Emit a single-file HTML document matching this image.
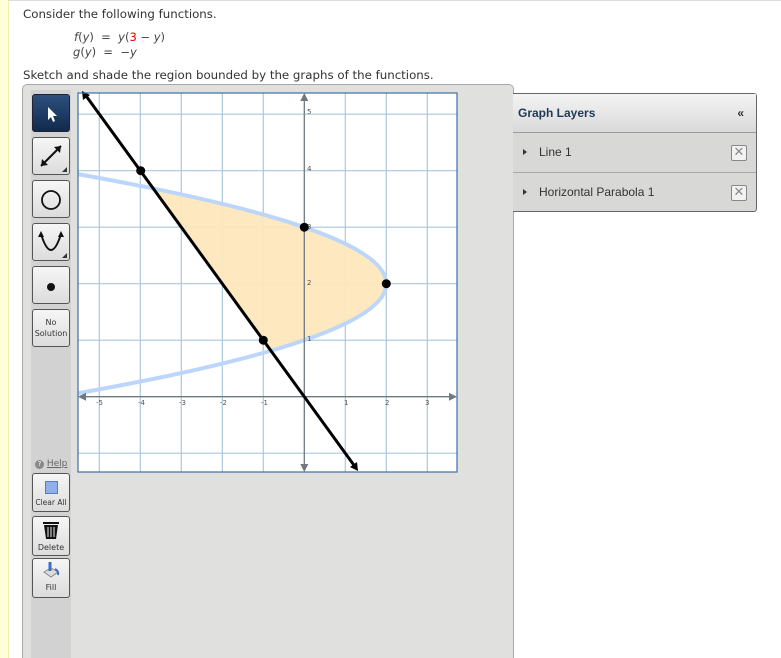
<!DOCTYPE html>
<html style="margin:0;height:658px;overflow:hidden"><head><meta charset="utf-8"><style>
body{margin:0;width:781px;height:658px;overflow:hidden;background:#fff;font-family:"DejaVu Sans","Liberation Sans",sans-serif;position:relative}
.strip{position:absolute;left:0;top:0;width:8px;height:658px;background:#fffed6;border-right:1px solid #f0eeb0}
.topline{position:absolute;left:8px;top:0;right:0;height:1px;background:#ddd}
.t{position:absolute;font-size:11.8px;color:#333;white-space:nowrap}
.m{position:absolute;font-size:11.5px;color:#444;font-family:"DejaVu Sans",sans-serif}
.panel{position:absolute;left:22px;top:84px;width:490px;height:590px;background:#e0e0df;border:1px solid #a8a8a8;border-radius:5px}
.tb{position:absolute;left:31px;top:90px;width:40px;height:570px;background:#d2d2d2}
.btn{position:absolute;left:32px;width:36px;height:36px;border:1px solid #555;border-radius:3px;background:linear-gradient(#f6f6f6,#dcdcdc);font-size:8px;color:#333;text-align:center;white-space:nowrap}
.btn svg{position:absolute;left:0;top:0}
.gl{position:absolute;left:513px;top:93px;width:243px;height:117px;border:1px solid #666;border-left:none;border-radius:0 3px 3px 0;background:#d8d8d6}
.gh{height:38px;background:linear-gradient(#f4f4f4,#d9d9d9);border-bottom:1px solid #999;font:bold 12px "Liberation Sans",sans-serif;color:#1e3a5a;line-height:38px;padding-left:5px;position:relative}
.row{height:39px;border-bottom:1px solid #aaa;font:12px "Liberation Sans",sans-serif;color:#333;line-height:39px;padding-left:26px;position:relative}
.row:last-child{border-bottom:none}
.row:before{content:"";position:absolute;left:10px;top:16px;border-left:4px solid #333;border-top:3px solid transparent;border-bottom:3px solid transparent}
.x{position:absolute;right:9px;top:12px;width:14px;height:14px;border:1px solid #888;border-radius:2px;background:#f2f2f2;color:#888;font:bold 13px/14px "DejaVu Sans",sans-serif;text-align:center}
</style></head><body>
<div class="strip"></div><div class="topline"></div>
<div class="t" style="left:23px;top:7px">Consider the following functions.</div>
<div class="m" style="left:74px;top:30px"><i>f</i>(<i>y</i>) &nbsp;= &nbsp;<i>y</i>(<span style="color:#e00">3</span> − <i>y</i>)</div>
<div class="m" style="left:73px;top:45px"><i>g</i>(<i>y</i>) &nbsp;= &nbsp;−<i>y</i></div>
<div class="t" style="left:23px;top:68px">Sketch and shade the region bounded by the graphs of the functions.</div>
<div class="panel"></div>
<div class="tb"></div>
<div class="btn" style="top:94px;background:linear-gradient(#2d4f7e,#112a4c);border-color:#223"><svg width="36" height="36"><path d="M15 12 L15 25 L18 22 L20 27 L22 26 L20 21 L24 21 Z" fill="#fff"/></svg></div>
<div class="btn" style="top:137px"><svg width="36" height="36"><path d="M8 28 L28 8" stroke="#111" stroke-width="2"/><path d="M28 8 l-7 1 l6 6z M8 28 l7 -1 l-6 -6z" fill="#111"/><path d="M34 34 l-5 0 l5 -5z" fill="#333"/></svg></div>
<div class="btn" style="top:180px"><svg width="36" height="36"><circle cx="18" cy="19" r="9" fill="none" stroke="#111" stroke-width="1.8"/></svg></div>
<div class="btn" style="top:223px"><svg width="36" height="36"><path d="M8 10 Q18 42 28 10" fill="none" stroke="#111" stroke-width="2"/><path d="M8 7 l-3 6 l6 0z M28 7 l-3 6 l6 0z" fill="#111"/><path d="M34 34 l-5 0 l5 -5z" fill="#333"/></svg></div>
<div class="btn" style="top:266px"><svg width="36" height="36"><circle cx="18" cy="20" r="4" fill="#111"/></svg></div>
<div class="btn" style="top:309px;line-height:11px;padding-top:7px;height:29px">No<br>Solution</div>
<div style="position:absolute;left:35px;top:459px;font:9px 'DejaVu Sans',sans-serif;color:#666"><span style="display:inline-block;width:9px;height:9px;border-radius:50%;background:#888;color:#fff;font-size:7px;text-align:center;line-height:9px">?</span> <u>Help</u></div>
<div class="btn" style="top:473px;height:37px"><div style="position:absolute;left:12px;top:7px;width:11px;height:11px;background:#8fb0e8;border:1px solid #5a7cc0"></div><div style="position:absolute;left:-2px;right:-2px;top:24px;font-size:7.5px">Clear All</div></div>
<div class="btn" style="top:516px;height:38px"><svg width="36" height="36"><path d="M10 5 h16 v2 h-16z M11 8 h14 l-2 14 h-10z" fill="#111"/><path d="M15 10 v10 M18 10 v10 M21 10 v10" stroke="#eee"/></svg><div style="position:absolute;left:0;right:0;top:26px">Delete</div></div>
<div class="btn" style="top:558px;height:38px"><svg width="36" height="36"><path d="M11 13 l7 -4 l7 4 l-7 5z" fill="#ddd" stroke="#888"/><path d="M17 3 v9" stroke="#3a6fc4" stroke-width="3"/><path d="M22 10 q4 2 3 6" stroke="#3a6fc4" stroke-width="2" fill="none"/></svg><div style="position:absolute;left:0;right:0;top:24px">Fill</div></div>

<svg style="position:absolute;left:0;top:0" width="781" height="658">
<defs><clipPath id="c"><rect x="78" y="93" width="379" height="379"/></clipPath></defs>
<rect x="78" y="93" width="379" height="379" fill="#fff"/>
<g stroke="#a9c8dc" stroke-width="1.2">
<line x1="99.3" y1="93" x2="99.3" y2="472"/><line x1="140.3" y1="93" x2="140.3" y2="472"/><line x1="181.3" y1="93" x2="181.3" y2="472"/><line x1="222.3" y1="93" x2="222.3" y2="472"/><line x1="263.3" y1="93" x2="263.3" y2="472"/><line x1="345.3" y1="93" x2="345.3" y2="472"/><line x1="386.3" y1="93" x2="386.3" y2="472"/><line x1="427.3" y1="93" x2="427.3" y2="472"/>
<line x1="78" y1="114.2" x2="457" y2="114.2"/><line x1="78" y1="170.7" x2="457" y2="170.7"/><line x1="78" y1="227.2" x2="457" y2="227.2"/><line x1="78" y1="283.7" x2="457" y2="283.7"/><line x1="78" y1="340.2" x2="457" y2="340.2"/><line x1="78" y1="453.2" x2="457" y2="453.2"/>
</g>
<g clip-path="url(#c)">
<path d="M153.2 188.4 Q550.3 269.6 270.9 350.7 Z" fill="#fde7bd" opacity=".95"/>
<path d="M41.7 167.9 Q730.9 283.7 41.7 399.5" fill="none" stroke="#bcd5fa" stroke-width="4"/>
</g>
<g stroke="#6e7a80" stroke-width="1.3"><line x1="80" y1="396.7" x2="455" y2="396.7"/><line x1="304.3" y1="95" x2="304.3" y2="470"/></g>
<g fill="#6e7a80"><path d="M78 396.7 l8 -4 v8z M457 396.7 l-8 -4 v8z M304.3 93 l-4 8 h8z M304.3 472 l-4 -8 h8z"/></g>
<g font-family="DejaVu Sans,sans-serif" font-size="7" fill="#555">
<text x="96" y="405">-5</text><text x="138" y="405">-4</text><text x="179" y="405">-3</text><text x="220" y="405">-2</text><text x="261" y="405">-1</text><text x="344" y="405">1</text><text x="385" y="405">2</text><text x="425" y="405">3</text>
<text x="307" y="114">5</text><text x="307" y="171">4</text><text x="307" y="229">3</text><text x="307" y="285">2</text><text x="307" y="341">1</text>
</g>
<g clip-path="url(#c)">
<line x1="84.7" y1="94" x2="356" y2="468" stroke="#000" stroke-width="3"/>
</g>
<path d="M82 91 l1 9 l7 -5z M358 471 l-1 -9 l-7 5z" fill="#000"/>
<g fill="#000"><circle cx="140.7" cy="170.7" r="4.5"/><circle cx="263.3" cy="340.2" r="4.5"/><circle cx="304.3" cy="227.2" r="4.5"/><circle cx="386.3" cy="283.7" r="4.5"/></g>
<rect x="78" y="93" width="379" height="379" fill="none" stroke="#3d6ea6" stroke-width="1.2"/>
</svg>

<div class="gl">
<div class="gh">Graph Layers<span style="position:absolute;right:12px;top:0;font-size:12px;color:#333">«</span></div>
<div class="row">Line 1<span class="x">✕</span></div>
<div class="row">Horizontal Parabola 1<span class="x">✕</span></div>
</div>
</body></html>
